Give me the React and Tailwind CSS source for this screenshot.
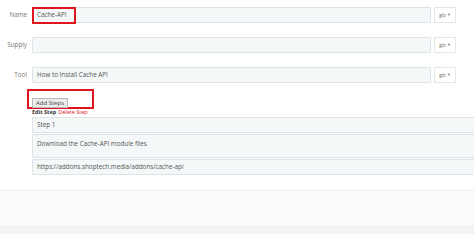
const fieldCls =
  'h-[16px] flex items-center px-[4px] bg-[#f5f8f9] border border-[#dde3e6] rounded-[1px] text-[6.3px] text-[#555]';

function Row({ label, value, highlight }) {
  return (
    <div className="flex items-center h-[16px]">
      <div className="w-[32px] pr-[5px] text-right text-[6.3px] text-[#777]">{label}</div>
      <div className={`relative w-[399px] ${fieldCls}`}>
        {value}
        {highlight && (
          <div className="absolute left-[-1px] top-[-1px] w-[44px] h-[17px] border-2 border-[#e0141e]" />
        )}
      </div>
      <div className="ml-[3px] w-[22px] h-[16px] flex items-center justify-center gap-[1px] border border-[#e4e6e8] bg-white text-[6px] text-[#777]">
        gb <span className="text-[4px]">▼</span>
      </div>
    </div>
  );
}

export default function App() {
  return (
    <div
      className="w-[474px] h-[234px] overflow-hidden bg-white flex flex-col"
      style={{ fontFamily: '"Open Sans", "Liberation Sans", sans-serif' }}
    >
      <div className="pt-[7px] flex flex-col gap-[14px]">
        <Row label="Name" value="Cache-API" highlight />
        <Row label="Supply" value="" />
        <Row label="Tool" value="How to Install Cache API" />
      </div>

      {/* Add steps */}
      <div className="ml-[27px] mt-[6px] w-[67px] h-[20px] border-2 border-[#e0141e] pl-[3px] pt-[7px]">
        <div className="w-[36px] h-[10px] flex items-center justify-center bg-[#ececec] border border-[#b9b9b9] text-[6px] text-[#444] leading-none">
          Add Steps
        </div>
      </div>
      <div className="ml-[32px] h-[8px] flex items-center gap-[2px] text-[5.5px] leading-none">
        <span className="font-bold text-[#333]">Edit Step</span>
        <span className="text-[#e0141e]">Delete Step</span>
      </div>

      <div className="ml-[32px] w-[446px] flex flex-col gap-[1px]">
        <div className={fieldCls}>Step 1</div>
        <div className="h-[24px] flex items-start pt-[4px] px-[4px] bg-[#f5f8f9] border border-[#dde3e6] rounded-[1px] text-[6.3px] text-[#555]">
          Download the Cache-API module files
        </div>
        <div className={fieldCls}>https://addons.shoptech.media/addons/cache-api</div>
      </div>

      <div className="mt-[15px] h-[35px] bg-[#fafbfc] border-t border-[#f0f1f3] shadow-[0_1px_2px_rgba(0,0,0,0.12)]" />
      <div className="flex-1 bg-[#f3f3f6]" />
    </div>
  );
}
